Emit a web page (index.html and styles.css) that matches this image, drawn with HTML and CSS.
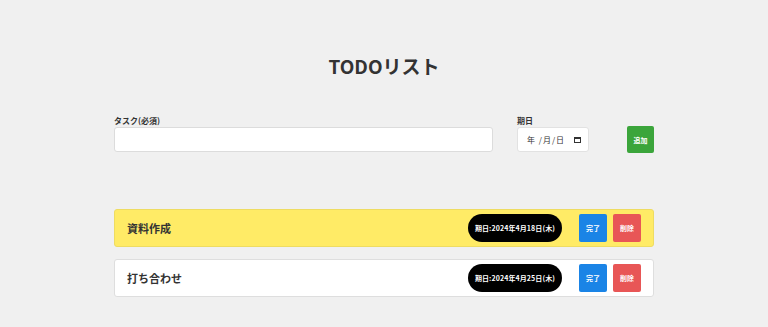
FILE: index.html
```html
<!DOCTYPE html>
<html lang="ja">

<head>
    <meta charset="UTF-8">
    <meta name="viewport" content="width=device-width, initial-scale=1.0">
    <title>TODOリスト</title>
    <link rel="stylesheet" href="styles.css">
</head>

<body>
    <div class="todo-container">
        <h1 class="todo-title">TODOリスト</h1>

        <form class="todo-form" id="todoForm">
            <div class="form-group form-group-task">
                <label class="form-label" for="taskInput">タスク(必須)</label>
                <input type="text" class="task-input" id="taskInput" autocomplete="off">
            </div>
            <div class="form-group form-group-date">
                <label class="form-label" for="dateInput">期日</label>
                <div class="date-input" id="dateInput">
                    <span class="date-placeholder">年 /月/日</span>
                    <svg class="calendar-icon" width="7" height="6" viewBox="0 0 7 6">
                        <rect x="0.5" y="0.5" width="6" height="5" fill="none" stroke="#333" stroke-width="1" />
                        <rect x="0.5" y="0.5" width="6" height="1.5" fill="#333" />
                    </svg>
                </div>
            </div>
            <button type="submit" class="add-button">追加</button>
        </form>

        <ul class="todo-list" id="todoList">
            <li class="todo-item todo-item-soon">
                <span class="todo-text">資料作成</span>
                <span class="due-badge">期日:2024年4月18日(木)</span>
                <button class="done-button">完了</button>
                <button class="delete-button">削除</button>
            </li>
            <li class="todo-item">
                <span class="todo-text">打ち合わせ</span>
                <span class="due-badge">期日:2024年4月25日(木)</span>
                <button class="done-button">完了</button>
                <button class="delete-button">削除</button>
            </li>
        </ul>
    </div>
</body>

</html>
```

FILE: styles.css
```css
* {
    margin: 0;
    padding: 0;
    box-sizing: border-box;
}

body {
    font-family: "Noto Sans CJK JP", "Noto Sans", sans-serif;
    background: #f0f0f0;
    color: #333;
}

.todo-container {
    max-width: 540px;
    margin: 0 auto;
    padding-top: 52px;
}

.todo-title {
    text-align: center;
    font-size: 19px;
    line-height: 28px;
    font-weight: bold;
    color: #333;
}

.todo-form {
    display: flex;
    align-items: flex-end;
    gap: 25px;
    margin-top: 36px;
}

.form-group {
    display: flex;
    flex-direction: column;
}

.form-group-task {
    flex: 1;
}

.form-group-date {
    width: 85px;
    margin-left: -1px;
}

.form-label {
    font-size: 8px;
    line-height: 10px;
    font-weight: bold;
    margin-bottom: 1px;
}

.task-input {
    height: 25px;
    border: 1px solid #dcdcdc;
    border-radius: 3px;
    background: white;
    padding: 0 6px;
    outline: none;
}

.date-input {
    display: flex;
    align-items: center;
    justify-content: space-between;
    width: 72px;
    height: 25px;
    border: 1px solid #e2e2e2;
    border-radius: 3px;
    background: white;
    padding: 0 7px 0 9px;
    font-size: 8px;
    color: #333;
    cursor: pointer;
}

.date-placeholder {
    white-space: nowrap;
    letter-spacing: 1px;
}

.calendar-icon {
    display: block;
}

.add-button {
    width: 27px;
    height: 27px;
    margin-bottom: -1px;
    background: #3ba53b;
    color: white;
    border: none;
    border-radius: 2px;
    font-family: inherit;
    font-size: 7px;
    font-weight: bold;
    cursor: pointer;
}

.todo-list {
    list-style: none;
    margin-top: 57px;
    display: flex;
    flex-direction: column;
    gap: 12px;
}

.todo-item {
    display: flex;
    align-items: center;
    height: 38px;
    padding: 0 12px;
    background: white;
    border: 1px solid #dedede;
    border-radius: 3px;
}

.todo-item-soon {
    background: #ffeb66;
    border-color: #eedc62;
}

.todo-text {
    flex: 1;
    font-size: 11px;
    font-weight: bold;
    color: #333;
}

.due-badge {
    height: 28px;
    line-height: 28px;
    padding: 0 7px;
    border-radius: 14px;
    background: black;
    color: white;
    font-size: 7px;
    font-weight: bold;
    white-space: nowrap;
    letter-spacing: 0.1px;
}

.done-button,
.delete-button {
    width: 28px;
    height: 28px;
    border: none;
    border-radius: 2px;
    color: white;
    font-family: inherit;
    font-size: 7px;
    font-weight: bold;
    cursor: pointer;
}

.done-button {
    margin-left: 17px;
    background: #1a84e6;
}

.delete-button {
    margin-left: 6px;
    background: #e85656;
}
```
